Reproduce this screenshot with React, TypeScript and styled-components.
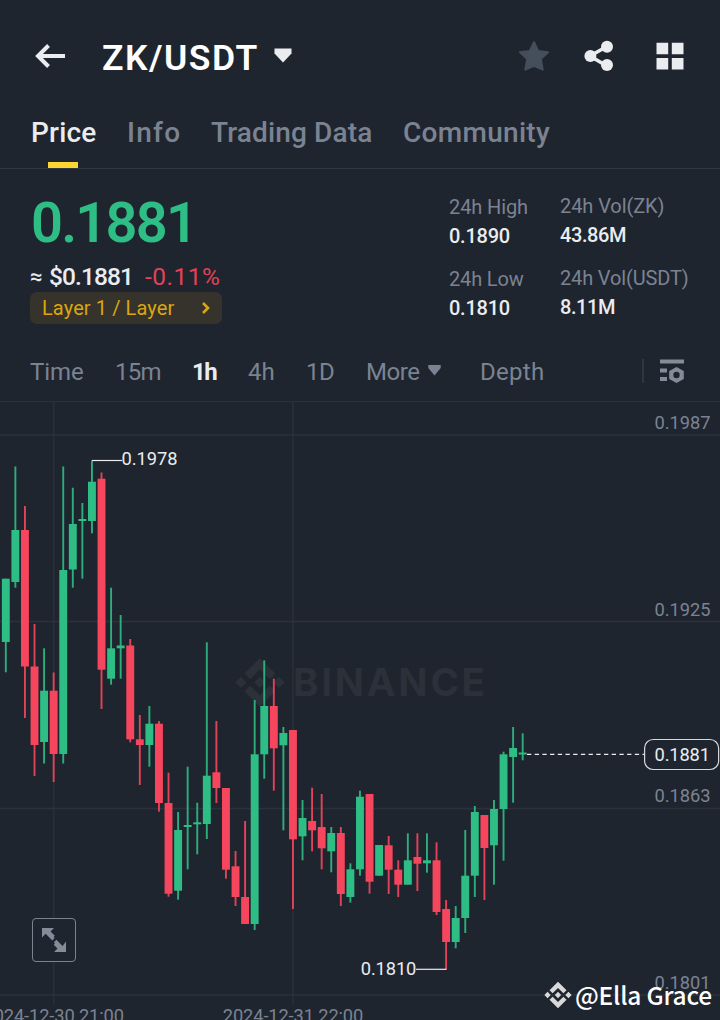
import React from "react";
import styled, { createGlobalStyle } from "styled-components";

const GREEN = "#2ebd85";
const RED = "#f6465d";
const MUTED = "#848b99";
const SUBTLE = "#7b8392";
const LIGHT = "#eaecef";
const BG = "#1f252f";

const GlobalStyle = createGlobalStyle`
  * { box-sizing: border-box; }
  html, body { margin: 0; padding: 0; background: ${BG}; }
  body { overflow: hidden; font-family: Roboto, "Liberation Sans", sans-serif; }
`;

const Screen = styled.div`
  width: 720px;
  height: 1020px;
  overflow: hidden;
  display: flex;
  flex-direction: column;
  background: ${BG};
`;

const Header = styled.header`
  height: 112px;
  padding: 0 35px;
  display: flex;
  align-items: center;
`;

const BackButton = styled.span`
  display: flex;
  width: 67px;
`;

const Pair = styled.h1`
  margin: 4px 0 0;
  width: 171px;
  font-size: 35.5px;
  line-height: 40px;
  font-weight: 600;
  letter-spacing: 1.5px;
  color: #ffffff;
  white-space: nowrap;
`;

const HeaderActions = styled.div`
  margin-left: auto;
  display: flex;
  align-items: center;
  gap: 32.5px;
`;

const ActionGroup = styled.div`
  display: flex;
  align-items: center;
  gap: 38.5px;
`;

const Tabs = styled.nav`
  height: 57px;
  padding: 1px 0 0 31px;
  display: flex;
  border-bottom: 1px solid #323842;
`;

const Tab = styled.div<{ $width: number; $spacing: number; $active?: boolean }>`
  width: ${(p) => p.$width}px;
  display: flex;
  flex-direction: column;
  justify-content: space-between;
  font-size: 28px;
  line-height: 40px;
  font-weight: 500;
  letter-spacing: ${(p) => p.$spacing}px;
  white-space: nowrap;
  color: ${(p) => (p.$active ? LIGHT : SUBTLE)};
`;

const TabMark = styled.span`
  width: 30px;
  height: 6px;
  margin-left: 17px;
  background: #fcd535;
`;

const Summary = styled.section`
  height: 172px;
  padding-left: 30px;
  display: flex;
`;

const PriceBlock = styled.div`
  width: 419px;
  padding-top: 24px;
`;

const LastPrice = styled.div`
  height: 60px;
  padding-left: 1px;
  font-size: 56px;
  line-height: 60px;
  font-weight: 600;
  letter-spacing: -1.8px;
  color: ${GREEN};
`;

const FiatRow = styled.div`
  height: 39px;
  padding-top: 9px;
  display: flex;
  font-size: 24.5px;
  line-height: 30px;
  font-weight: 500;
  color: ${LIGHT};
  white-space: nowrap;
`;

const Approx = styled.span`
  width: 19px;
  font-size: 22px;
`;

const Fiat = styled.span`
  width: 96px;
  letter-spacing: -0.9px;
`;

const Change = styled.span`
  color: ${RED};
  opacity: 0.9;
  font-weight: 400;
  letter-spacing: 0.5px;
`;

const Category = styled.div`
  width: 192px;
  height: 32px;
  padding: 0 11px 0 12px;
  border-radius: 7px;
  display: flex;
  align-items: center;
  justify-content: space-between;
  background: #35332b;
  color: #dba60f;
  font-size: 20px;
  letter-spacing: 0.1px;
`;

const Stats = styled.div<{ $width: number; $top: number }>`
  width: ${(p) => p.$width}px;
  padding-top: ${(p) => p.$top}px;
  display: flex;
  flex-direction: column;
  gap: 15px;
`;

const StatLabel = styled.div<{ $spacing: number }>`
  font-size: 20px;
  line-height: 28px;
  letter-spacing: ${(p) => p.$spacing}px;
  color: ${SUBTLE};
  white-space: nowrap;
`;

const StatValue = styled.div<{ $spacing: number }>`
  margin-top: 1px;
  font-size: 20px;
  line-height: 28px;
  font-weight: 500;
  letter-spacing: ${(p) => p.$spacing}px;
  color: ${LIGHT};
`;

const Intervals = styled.div`
  height: 61px;
  padding: 2px 36px 0 30px;
  display: flex;
  align-items: center;
  font-size: 24px;
  line-height: 30px;
`;

const Interval = styled.span<{ $width: number; $spacing: number; $active?: boolean }>`
  width: ${(p) => p.$width}px;
  display: flex;
  align-items: center;
  letter-spacing: ${(p) => p.$spacing}px;
  font-weight: ${(p) => (p.$active ? 700 : 400)};
  color: ${(p) => (p.$active ? LIGHT : SUBTLE)};
  white-space: nowrap;
`;

const Divider = styled.span`
  width: 2px;
  height: 24px;
  margin: 0 16px 2px auto;
  background: #303641;
`;

const ChartArea = styled.section`
  position: relative;
  height: 619px;
  border-top: 1px solid #2a303a;
`;

const ChartSvg = styled.svg`
  display: block;
`;

const ExpandButton = styled.button`
  position: absolute;
  left: 32px;
  top: 516px;
  width: 44px;
  height: 44px;
  padding: 0;
  display: flex;
  align-items: center;
  justify-content: center;
  background: ${BG};
  border: 1px solid #7b8290;
  border-radius: 4px;
`;

const Signature = styled.div`
  position: absolute;
  left: 544px;
  top: 576px;
  display: flex;
  align-items: center;
  gap: 3px;
  font-family: "Noto Sans CJK SC", "Noto Sans", sans-serif;
  font-size: 24.5px;
  line-height: 34px;
  font-weight: 500;
  letter-spacing: -0.2px;
  color: #ffffff;
  white-space: nowrap;
`;

const tabs = [
  { label: "Price", width: 96, spacing: 0.2, active: true },
  { label: "Info", width: 84, spacing: 1.3 },
  { label: "Trading Data", width: 192, spacing: 0.15 },
  { label: "Community", width: 150, spacing: 0.3 },
];

const intervals = [
  { label: "Time", width: 85, spacing: -0.1 },
  { label: "15m", width: 77, spacing: -0.7 },
  { label: "1h", width: 56, spacing: -1.6, active: true },
  { label: "4h", width: 58, spacing: 0 },
  { label: "1D", width: 60, spacing: -0.6 },
];

const statColumns = [
  {
    width: 111,
    top: 24,
    items: [
      { label: "24h High", value: "0.1890", ls: -0.1, vs: -0.25 },
      { label: "24h Low", value: "0.1810", ls: -0.15, vs: -0.25 },
    ],
  },
  {
    width: 150,
    top: 23,
    items: [
      { label: "24h Vol(ZK)", value: "43.86M", ls: -0.08, vs: -0.4 },
      { label: "24h Vol(USDT)", value: "8.11M", ls: -0.15, vs: -0.4 },
    ],
  },
];

// [direction, high, body top, body bottom, low]
type Candle = [0 | 1, number, number, number, number];
const candles: Candle[] = [
  [1, 578.7, 578.7, 642, 672.3],
  [1, 466.5, 530, 582, 587.7],
  [0, 506, 530, 666.5, 718],
  [0, 624, 666.5, 745, 776],
  [1, 648.3, 690.7, 742, 763.5],
  [0, 672.5, 690.7, 754, 782],
  [1, 466.5, 570, 754, 763.5],
  [1, 487.7, 524, 569.5, 587.7],
  [1, 503, 519, 521, 578.7],
  [1, 460.5, 481.7, 521, 533.3],
  [0, 472.5, 478.7, 669.7, 709],
  [1, 587.7, 648.3, 678.7, 684.7],
  [1, 615, 645.5, 648.3, 678.7],
  [0, 639, 645.5, 739.3, 742.3],
  [0, 715, 739.3, 745, 785],
  [1, 706, 723.7, 745, 766.7],
  [0, 721, 723.7, 803, 811.7],
  [0, 772.7, 803, 893.7, 896.7],
  [1, 812, 830, 890.7, 899.7],
  [1, 766.7, 825, 827, 869.3],
  [1, 802.7, 822.3, 824.3, 854.3],
  [1, 642.3, 775.7, 824, 839],
  [0, 721, 772.3, 788, 803],
  [0, 788, 788, 869.7, 878.7],
  [0, 851, 866.3, 897, 906],
  [0, 821, 897, 924, 924],
  [1, 700, 754.3, 924, 930],
  [1, 660.3, 706, 754.3, 778.7],
  [0, 678.7, 706, 748.3, 790.7],
  [1, 727, 733, 745.3, 830.3],
  [0, 730, 730, 839.3, 909],
  [1, 800, 818, 836.3, 860.3],
  [0, 787.7, 821, 830.3, 851.3],
  [0, 794, 827, 848.3, 869.3],
  [1, 827, 833, 851.3, 872.3],
  [0, 827, 833, 894, 906],
  [1, 863.3, 869.3, 897, 902.7],
  [1, 790.7, 796.7, 869.3, 875.7],
  [0, 794, 794, 881.7, 893.7],
  [1, 845, 845, 875.7, 875.7],
  [0, 836, 845.3, 869.7, 894],
  [0, 860.3, 869.7, 884.7, 897],
  [1, 833.3, 860.3, 884.7, 884.7],
  [0, 833.3, 857, 863.7, 891],
  [1, 833.3, 860.3, 863.3, 872.7],
  [0, 842.3, 860.3, 912, 915],
  [0, 900, 909, 942, 969.3],
  [1, 906, 918, 942, 948.3],
  [1, 830, 875.7, 918, 933],
  [1, 806, 812, 875.7, 897],
  [0, 815, 815, 848, 900],
  [1, 800, 809, 845.3, 884.7],
  [1, 751.7, 754.3, 809, 860.7],
  [1, 727, 748, 757, 802.7],
  [1, 733.3, 752.5, 754.5, 760.3],
];

const axisLabels = [
  { text: "0.1987", y: 429 },
  { text: "0.1925", y: 616 },
  { text: "0.1863", y: 802 },
  { text: "0.1801", y: 989 },
];

const BinanceMark = () => (
  <>
    <path d="M38.2 53.2 64 27.5l25.8 25.7 15-15L64-2.6 23.2 38.2Z" transform="translate(0 2.6)" />
    <path d="M-1 64l15-15 15 15-15 15ZM49 64l15-15 15 15-15 15ZM99 64l15-15 15 15-15 15Z" />
    <path d="M38.2 72.2 64 98l25.8-25.8 15 15L64 128 23.2 87.2Z" />
  </>
);

const Chart = () => (
  <ChartSvg width="720" height="618" viewBox="0 402 720 618" fontFamily="Roboto, 'Liberation Sans', sans-serif" fontSize="18.3">
    <g stroke="#2c323c" strokeWidth="1.3">
      {[435, 621.5, 808.5, 995].map((y) => (
        <line key={y} x1="0" x2="720" y1={y} y2={y} />
      ))}
      {[53.8, 293].map((x) => (
        <line key={x} x1={x} x2={x} y1="402" y2="1005" />
      ))}
    </g>
    <g fill="#2b3039">
      <g transform="translate(235.5 658) scale(0.381)">
        <BinanceMark />
      </g>
      <text x="293" y="696" fontFamily="Inter, sans-serif" fontWeight="700" fontSize="38.5" textLength="192">
        BINANCE
      </text>
    </g>
    {candles.map(([up, high, top, bottom, low], i) => {
      const x = 5.8 + i * 9.572;
      return (
        <g key={i} fill={up ? GREEN : RED}>
          <rect x={x - 0.95} y={high} width="1.9" height={low - high} opacity="0.9" />
          <rect x={x - 3.95} y={top} width="7.9" height={bottom - top} />
        </g>
      );
    })}
    <g stroke={LIGHT} strokeWidth="1.2">
      <line x1="92" x2="122" y1="460.5" y2="460.5" />
      <line x1="416" x2="446.5" y1="969.3" y2="969.3" />
      <line x1="527" x2="644" y1="754.4" y2="754.4" strokeDasharray="4.3 3.4" />
    </g>
    <g fill={LIGHT}>
      <text x="121.5" y="465" textLength="56">0.1978</text>
      <text x="360.8" y="975" textLength="55.5">0.1810</text>
    </g>
    <g fill={SUBTLE}>
      {axisLabels.map((l) => (
        <text key={l.text} x="654.5" y={l.y} textLength="56">
          {l.text}
        </text>
      ))}
      <text x="-16.5" y="1022" textLength="140.5">2024-12-30 21:00</text>
      <text x="222.8" y="1022" textLength="140.5">2024-12-31 22:00</text>
    </g>
    <rect x="644.6" y="739.5" width="74" height="30" rx="8.5" fill={BG} stroke="#d5d8dd" strokeWidth="1.2" />
    <text x="654.5" y="761" textLength="55.5" fill={LIGHT}>0.1881</text>
  </ChartSvg>
);

export default function App() {
  return (
    <Screen>
      <GlobalStyle />
      <Header>
        <BackButton>
          <svg width="31" height="26" viewBox="0 0 31 26" fill="none" stroke="#eaecef" strokeWidth="4">
            <path d="M30 13H3M13.5 2.5 3 13l10.5 10.5" />
          </svg>
        </BackButton>
        <Pair>ZK/USDT</Pair>
        <svg width="20" height="15" viewBox="0 0 20 15" fill="#eaecef">
          <path d="M1.5 0.5h17v5L10 14.5 1.5 5.5Z" />
        </svg>
        <HeaderActions>
          <svg width="32" height="32" viewBox="0 0 32 32" fill="#454e5b" stroke="#454e5b" strokeWidth="2" strokeLinejoin="round">
            <path d="M16 2.2l4.2 8.8 9.8 1.3-7.2 6.7 1.9 10.7L16 25.9l-8.7 3.8L9.2 19 2 12.3 11.8 11Z" />
          </svg>
          <ActionGroup>
            <svg width="32" height="32" viewBox="0 0 32 32" fill="#eaecef">
              <path d="M23 7 7 16l16 9.5" fill="none" stroke="#eaecef" strokeWidth="3.6" />
              <circle cx="24" cy="6.8" r="6" />
              <circle cx="7.4" cy="16" r="6" />
              <circle cx="24" cy="25" r="6" />
            </svg>
            <svg width="32" height="32" viewBox="0 0 32 32" fill="#eaecef">
              <path d="M3.5 2.7h11.7v11.5H3.5ZM18.8 2.7h11.7v11.5H18.8ZM3.5 18h11.7v11.5H3.5ZM18.8 18h11.7v11.5H18.8Z" />
            </svg>
          </ActionGroup>
        </HeaderActions>
      </Header>

      <Tabs>
        {tabs.map((t) => (
          <Tab key={t.label} $width={t.width} $spacing={t.spacing} $active={t.active}>
            {t.label}
            {t.active && <TabMark />}
          </Tab>
        ))}
      </Tabs>

      <Summary>
        <PriceBlock>
          <LastPrice>0.1881</LastPrice>
          <FiatRow>
            <Approx>≈</Approx>
            <Fiat>$0.1881</Fiat>
            <Change>-0.11%</Change>
          </FiatRow>
          <Category>
            Layer 1 / Layer
            <svg width="10" height="14" viewBox="0 0 10 14" fill="none" stroke="#dba60f" strokeWidth="2.6">
              <path d="M2 2l5 5-5 5" />
            </svg>
          </Category>
        </PriceBlock>
        {statColumns.map((c) => (
          <Stats key={c.top} $width={c.width} $top={c.top}>
            {c.items.map((s) => (
              <div key={s.label}>
                <StatLabel $spacing={s.ls}>{s.label}</StatLabel>
                <StatValue $spacing={s.vs}>{s.value}</StatValue>
              </div>
            ))}
          </Stats>
        ))}
      </Summary>

      <Intervals>
        {intervals.map((t) => (
          <Interval key={t.label} $width={t.width} $spacing={t.spacing} $active={t.active}>
            {t.label}
          </Interval>
        ))}
        <Interval $width={62} $spacing={-0.4}>More</Interval>
        <Interval $width={52} $spacing={0}>
          <svg width="13" height="13" viewBox="0 0 13 13" fill={SUBTLE}>
            <path d="M0.3 0h12.4v3L6.5 10.5.3 3Z" />
          </svg>
        </Interval>
        <Interval $width={70} $spacing={0.3}>Depth</Interval>
        <Divider />
        <svg width="24" height="25" viewBox="0 0 24 25" fill={MUTED}>
          <path d="M0 0.5h24v4H0ZM0 9.5h7v4H0ZM0 18h7v4H0Z" />
          <path fillRule="evenodd" d="M16.5 8l7.3 4v8l-7.3 4-7.3-4v-8ZM16.5 12.8a3.2 3.2 0 1 0 0 6.4 3.2 3.2 0 0 0 0-6.4Z" />
        </svg>
      </Intervals>

      <ChartArea>
        <Chart />
        <ExpandButton aria-label="Expand chart">
          <svg width="26" height="26" viewBox="0 0 26 26" fill="#848b99">
            <path d="M1 1h12L9.5 4.5l4.3 4.3-1.2 1.2 1.1 1.1-2.4 2.4-6.6-6.7L1 10.5Z" />
            <path d="M25 25H13l3.5-3.5-3.8-3.8 1.3-1.3-1.1-1.1 2.5-2.5 6.1 6.1L25 14.5Z" />
          </svg>
        </ExpandButton>
        <Signature>
          <svg width="28" height="28" viewBox="-3 -3 134 134" fill="#d9d9d9">
            <BinanceMark />
          </svg>
          @Ella Grace
        </Signature>
      </ChartArea>
    </Screen>
  );
}
